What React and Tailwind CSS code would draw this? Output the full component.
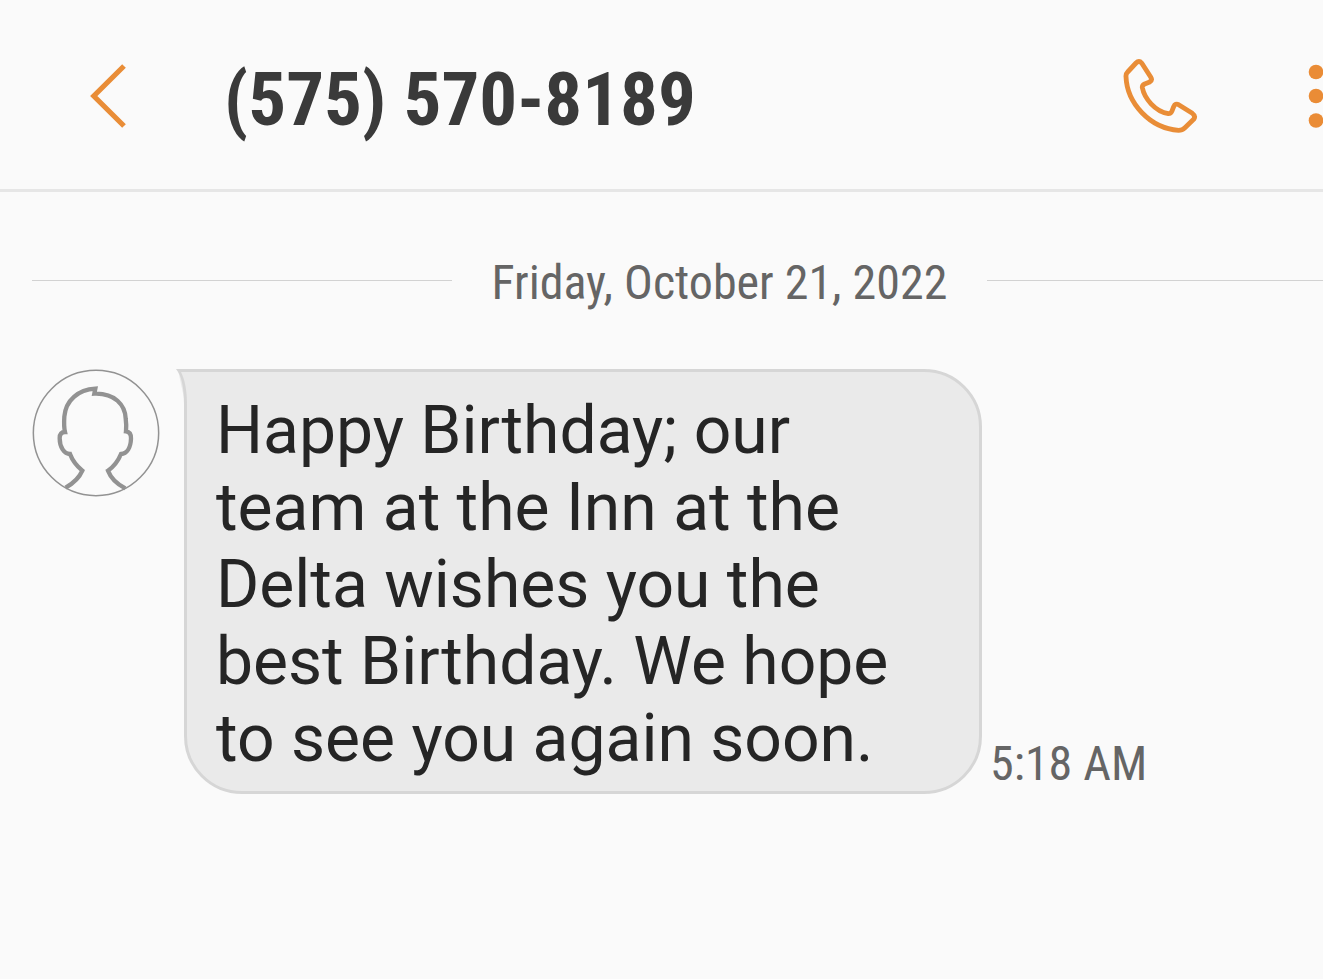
function Header() {
  return (
    <header className="flex items-center border-b-3 border-[#e6e6e6] pt-8 pb-[29px] pl-20">
      <button type="button" aria-label="Back" className="flex h-32 w-14 shrink-0 items-center justify-center text-[#e98d37]">
        <svg viewBox="0 0 40 68" className="h-[68px] w-10" fill="none" stroke="currentColor" strokeWidth="5.2" aria-hidden="true">
          <path d="M36 4 5.8 34 36 64" />
        </svg>
      </button>
      <h1 className="ml-[88px] flex-1 pt-1.5 text-[75px] leading-[88px] font-bold whitespace-nowrap text-[#3a3a3a]">
        (575) 570-8189
      </h1>
      <button type="button" aria-label="Call" className="flex h-32 w-24 shrink-0 items-center justify-center text-[#e98d37]">
        <svg viewBox="66 54 228 228" className="size-[76px]" fill="none" stroke="currentColor" strokeWidth="14.5" strokeLinejoin="round" aria-hidden="true">
          <path d="M83 96 108 69Q117 60 125 69L152 111Q158 120 149 126L134 132Q126 136 127 143C133 175 165 214 205 221Q213 221 216 213L221 200Q226 189 236 194L277 220Q288 228 281 238L254 264Q247 271 236 271C150 265 81 190 78 110Q77 102 83 96Z" />
        </svg>
      </button>
      <button type="button" aria-label="More options" className="ml-[100px] flex h-32 shrink-0 items-center text-[#ea8c36]">
        <svg viewBox="0 0 15 64" className="h-16 w-[15px]" fill="currentColor" aria-hidden="true">
          <circle cx="8" cy="8" r="7.3" />
          <circle cx="8" cy="32" r="7.3" />
          <circle cx="8" cy="56.5" r="7.3" />
        </svg>
      </button>
    </header>
  );
}

function DateDivider({ children }) {
  return (
    <div className="flex items-center gap-10 pl-8">
      <span className="h-px grow-5 bg-[#d2d2d2]" />
      <time dateTime="2022-10-21" className="pt-1.5 text-5xl leading-14 whitespace-nowrap text-[#656565]">
        {children}
      </time>
      <span className="h-px grow-4 bg-[#d2d2d2]" />
    </div>
  );
}

function Avatar() {
  return (
    <svg viewBox="36 42 384 384" className="size-32 shrink-0" fill="none" stroke="#929292" role="img" aria-label="Contact">
      <circle cx="228" cy="234" r="188" strokeWidth="4.5" />
      <path
        strokeWidth="13"
        d="M137 398C162 384 178 368 187 347C170 333 158 318 150 297C132 297 119 276 119 250Q119 231 135 231C131 214 132 200 133 185C137 135 175 104 226 101L223 116C285 114 315 150 317 190Q320 213 318 229Q334 231 333 251C332 278 321 296 303 297C294 319 281 335 264 347C272 368 289 386 316 400"
      />
    </svg>
  );
}

function Message({ text, time }) {
  return (
    <article className="flex items-end gap-2">
      <div className="relative max-w-[798px] rounded-r-[58px] rounded-bl-[58px] border-3 border-[#d6d6d6] bg-[#eaeaea] pt-5 pr-16 pb-3.5 pl-[29px]">
        <svg viewBox="0 0 14 36" className="absolute -top-[3px] -left-[11px] h-9 w-3.5" aria-hidden="true">
          <path fill="#eaeaea" d="M2 1H14V36H9.5Z" />
          <path fill="#d6d6d6" d="M0 0H14V3H5C9 11 11 22 11 36H8C8 20 6 7 0 0Z" />
        </svg>
        <p className="font-[Roboto,sans-serif] text-[66px] leading-[77px] text-[#252525]">{text}</p>
      </div>
      <time dateTime="05:18" className="pb-0.5 text-5xl leading-14 whitespace-nowrap text-[#656565]">
        {time}
      </time>
    </article>
  );
}

export default function App() {
  return (
    <div className="min-h-screen overflow-x-hidden bg-[#fafafa] font-['Roboto_Condensed',Roboto,sans-serif]">
      <Header />
      <main className="pt-[57px]">
        <DateDivider>Friday, October 21, 2022</DateDivider>
        <section className="mt-[58px] flex items-start gap-6 pl-8">
          <Avatar />
          <Message
            text="Happy Birthday; our team at the Inn at the Delta wishes you the best Birthday. We hope to see you again soon."
            time="5:18 AM"
          />
        </section>
      </main>
    </div>
  );
}
